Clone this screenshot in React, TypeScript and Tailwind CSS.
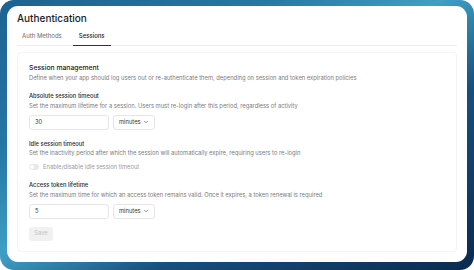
import React from 'react';
import { ChevronDown } from 'lucide-react';

const font = { fontFamily: 'Inter, "Noto Sans", sans-serif' };

function Field({ label, hint, children }: { label: string; hint: string; children: React.ReactNode }) {
  return (
    <div className="flex flex-col">
      <div className="text-[5.8px] leading-[8px] font-medium text-[#1f1f1f]">{label}</div>
      <div className="mt-[1.5px] text-[5.8px] leading-[8px] text-[#7b7b7b]">{hint}</div>
      {children}
    </div>
  );
}

function DurationInput({ value }: { value: string }) {
  return (
    <div className="mt-[5px] flex gap-[4px]">
      <div className="w-[80px] h-[15px] rounded-[3px] border border-[#e6e6e6] px-[5px] flex items-center text-[5.8px] text-[#333]">
        {value}
      </div>
      <div className="w-[42px] h-[15px] rounded-[3px] border border-[#e6e6e6] px-[5px] flex items-center gap-[2px] text-[5.8px] text-[#333]">
        minutes
        <ChevronDown size={6} strokeWidth={2.5} className="text-[#444]" />
      </div>
    </div>
  );
}

export default function App() {
  return (
    <div className="w-[474px] h-[270px] bg-white" style={font}>
      <div className="h-full rounded-[14px] pt-[6px] px-[7px] pb-[8px] bg-[linear-gradient(150deg,#1c6292_0%,#2477a6_28%,#3f9fc4_47%,#16507f_66%,#0b2a4f_100%)]">
        <div className="h-full rounded-[11px] bg-white px-[10px] pt-[5px] pb-[10px] flex flex-col">
          <h1 className="text-[10px] leading-[14px] font-medium text-[#1c1c1c]">Authentication</h1>

          <div className="mt-[7px] flex gap-[6px] border-b border-[#ededed]">
            <div className="px-[5px] pb-[5px] text-[6px] leading-[8px] text-[#6b6b6b]">Auth Methods</div>
            <div className="-mb-px px-[6px] pb-[5px] text-[6px] leading-[8px] font-medium text-[#222] border-b-[1.5px] border-[#333]">
              Sessions
            </div>
          </div>

          <div className="mt-[6px] flex-1 rounded-[4px] border border-[#f3f3f3] px-[11px] pt-[10px] pb-[10px] flex flex-col">
            <div className="text-[6.8px] leading-[10px] font-medium text-[#1c1c1c]">Session management</div>
            <div className="mt-[1px] text-[5.8px] leading-[8px] text-[#7b7b7b]">
              Define when your app should log users out or re-authenticate them, depending on session and token expiration policies
            </div>

            <div className="mt-[10px] flex flex-col gap-[10px]">
              <Field
                label="Absolute session timeout"
                hint="Set the maximum lifetime for a session. Users must re-login after this period, regardless of activity"
              >
                <DurationInput value="30" />
              </Field>

              <Field
                label="Idle session timeout"
                hint="Set the inactivity period after which the session will automatically expire, requiring users to re-login"
              >
                <div className="mt-[6px] flex items-center gap-[4px] h-[8px]">
                  <div className="w-[10px] h-[5.5px] rounded-full bg-[#e8e8e8] p-[0.75px] flex">
                    <div className="w-[4px] h-[4px] rounded-full bg-white" />
                  </div>
                  <span className="text-[5.8px] leading-[8px] text-[#9a9a9a]">Enable/disable idle session timeout</span>
                </div>
              </Field>

              <Field
                label="Access token lifetime"
                hint="Set the maximum time for which an access token remains valid. Once it expires, a token renewal is required"
              >
                <DurationInput value="5" />
              </Field>
            </div>

            <button className="mt-[8px] w-[24px] h-[14px] rounded-[3px] bg-[#f1f1f1] text-[5.8px] text-[#c2c2c2]">Save</button>
          </div>
        </div>
      </div>
    </div>
  );
}
